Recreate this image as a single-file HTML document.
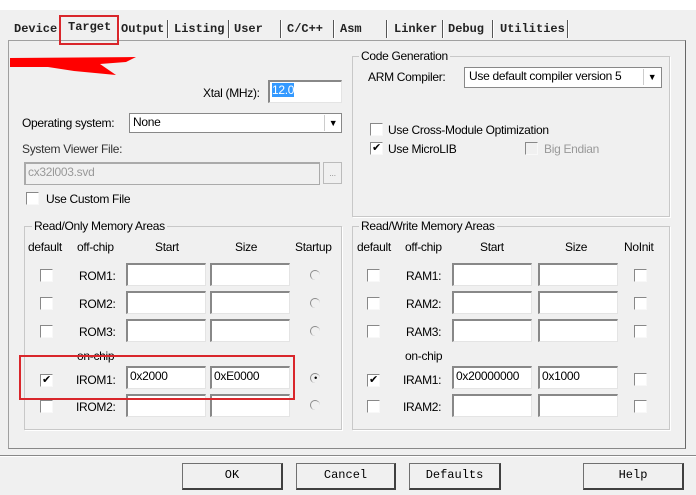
<!DOCTYPE html>
<html><head><meta charset="utf-8"><style>
body{margin:0;width:696px;height:495px;background:#fff;position:relative;overflow:hidden;font-family:"Liberation Sans",sans-serif;font-size:12px;color:#000;letter-spacing:-0.3px}
.a{position:absolute;white-space:nowrap}
.bg{left:0;top:10px;width:696px;height:485px;background:#f0f0f0}
.tab{font-family:"Liberation Mono","Noto Serif CJK SC",monospace;font-size:12px;letter-spacing:0;font-weight:bold;color:#222}
.vs{width:1px;height:18px;background:#555;border-right:1px solid #fff}
.panel{left:8px;top:40px;width:676px;height:407px;border:1px solid #a0a0a0;border-right-color:#666;border-bottom-color:#888}
.grp{border:1px solid #c8c8c8;box-shadow:1px 1px 0 #fff}
.gt{background:#f0f0f0;padding:0 2px}
.in{background:#fff;border-top:2px solid #888;border-left:2px solid #888;border-bottom:1px solid #e4e4e4;border-right:1px solid #e4e4e4;box-sizing:border-box;padding:1px 2px;font-size:12px}
.cb{width:11px;height:11px;background:#fff;border-top:1px solid #888;border-left:1px solid #888;border-bottom:1px solid #f8f8f8;border-right:1px solid #f8f8f8;font-size:11px;line-height:11px;text-align:center}
.rd{width:10px;height:10px;border-radius:50%;border-left:1px solid #888;border-top:1px solid #888;box-sizing:border-box;font-size:9px;line-height:8px;text-align:center}
.btn{border:1px solid #707070;border-right:2px solid #404040;border-bottom:2px solid #404040;background:#f0f0f0;box-sizing:border-box;font-family:"Liberation Mono",monospace;font-size:12px;text-align:center;line-height:23px;letter-spacing:0}
.red{border:2px solid #d9262b;box-sizing:border-box}
.dd{width:16px;height:16px;border-left:1px solid #ccc;font-size:9px;text-align:center;line-height:16px}
</style></head><body>
<div class="a bg"></div>
<div class="a panel"></div>
<!-- tabs -->
<div class="a tab" style="left:14px;top:22px">Device</div>
<div class="a tab" style="left:68px;top:20px">Target</div>
<div class="a vs" style="left:118px;top:20px"></div>
<div class="a tab" style="left:121px;top:22px">Output</div>
<div class="a vs" style="left:167px;top:20px"></div>
<div class="a tab" style="left:174px;top:22px">Listing</div>
<div class="a vs" style="left:228px;top:20px"></div>
<div class="a tab" style="left:234px;top:22px">User</div>
<div class="a vs" style="left:280px;top:20px"></div>
<div class="a tab" style="left:287px;top:22px">C/C++</div>
<div class="a vs" style="left:333px;top:20px"></div>
<div class="a tab" style="left:340px;top:22px">Asm</div>
<div class="a vs" style="left:386px;top:20px"></div>
<div class="a tab" style="left:394px;top:22px">Linker</div>
<div class="a vs" style="left:442px;top:20px"></div>
<div class="a tab" style="left:448px;top:22px">Debug</div>
<div class="a vs" style="left:492px;top:20px"></div>
<div class="a tab" style="left:500px;top:22px">Utilities</div>
<div class="a vs" style="left:567px;top:20px"></div>
<div class="a red" style="left:59px;top:15px;width:60px;height:30px"></div>
<!-- scribble -->
<svg class="a" style="left:8px;top:52px" width="132" height="26"><path d="M2 6 L128 5 L118 10 L92 12 L108 23 L66 19 L40 15 L2 15 Z" fill="#ff0000"/></svg>
<!-- left top -->
<div class="a" style="left:203px;top:86px">Xtal (MHz):</div>
<div class="a in" style="left:268px;top:80px;width:74px;height:23px"><span style="background:#3399ff;color:#fff">12.0</span></div>
<div class="a" style="left:22px;top:116px">Operating system:</div>
<div class="a in" style="left:129px;top:113px;width:213px;height:20px;border-width:1px;border-color:#888;padding:1px 3px">None</div>
<div class="a dd" style="left:324px;top:115px">▼</div>
<div class="a" style="left:22px;top:142px;color:#333">System Viewer File:</div>
<div class="a in" style="left:24px;top:162px;width:296px;height:23px;background:#f0f0f0;color:#999;border-color:#aaa">cx32l003.svd</div>
<div class="a" style="left:323px;top:162px;width:19px;height:22px;border:1px solid #bbb;box-sizing:border-box;color:#999;font-size:9px;text-align:center;line-height:20px">...</div>
<div class="a cb" style="left:26px;top:192px"></div>
<div class="a" style="left:46px;top:192px">Use Custom File</div>
<!-- RO group -->
<div class="a grp" style="left:24px;top:226px;width:316px;height:202px"></div>
<div class="a gt" style="left:32px;top:219px">Read/Only Memory Areas</div>
<div class="a" style="left:28px;top:240px">default</div>
<div class="a" style="left:77px;top:240px">off-chip</div>
<div class="a" style="left:155px;top:240px">Start</div>
<div class="a" style="left:235px;top:240px">Size</div>
<div class="a" style="left:295px;top:240px">Startup</div>
<div class="a" style="left:77px;top:349px">on-chip</div>
<!-- RO rows -->
<div class="a cb" style="left:40px;top:269px"></div><div class="a" style="left:79px;top:269px">ROM1:</div>
<div class="a in" style="left:126px;top:263px;width:80px;height:23px"></div><div class="a in" style="left:210px;top:263px;width:80px;height:23px"></div><div class="a rd" style="left:310px;top:270px"></div>
<div class="a cb" style="left:40px;top:297px"></div><div class="a" style="left:79px;top:297px">ROM2:</div>
<div class="a in" style="left:126px;top:291px;width:80px;height:23px"></div><div class="a in" style="left:210px;top:291px;width:80px;height:23px"></div><div class="a rd" style="left:310px;top:298px"></div>
<div class="a cb" style="left:40px;top:325px"></div><div class="a" style="left:79px;top:325px">ROM3:</div>
<div class="a in" style="left:126px;top:319px;width:80px;height:23px"></div><div class="a in" style="left:210px;top:319px;width:80px;height:23px"></div><div class="a rd" style="left:310px;top:326px"></div>
<div class="a cb" style="left:40px;top:374px">✔</div><div class="a" style="left:76px;top:373px">IROM1:</div>
<div class="a in" style="left:126px;top:366px;width:80px;height:23px">0x2000</div><div class="a in" style="left:210px;top:366px;width:80px;height:23px">0xE0000</div><div class="a rd" style="left:310px;top:373px">•</div>
<div class="a cb" style="left:40px;top:400px"></div><div class="a" style="left:76px;top:400px">IROM2:</div>
<div class="a in" style="left:126px;top:394px;width:80px;height:23px"></div><div class="a in" style="left:210px;top:394px;width:80px;height:23px"></div><div class="a rd" style="left:310px;top:400px"></div>
<div class="a red" style="left:19px;top:355px;width:276px;height:45px"></div>
<!-- code gen -->
<div class="a grp" style="left:352px;top:56px;width:316px;height:159px"></div>
<div class="a gt" style="left:359px;top:49px">Code Generation</div>
<div class="a" style="left:368px;top:70px">ARM Compiler:</div>
<div class="a in" style="left:464px;top:67px;width:198px;height:21px;border-width:1px;border-color:#888;padding:1px 4px">Use default compiler version 5</div>
<div class="a dd" style="left:643px;top:69px">▼</div>
<div class="a cb" style="left:370px;top:123px"></div><div class="a" style="left:388px;top:123px">Use Cross-Module Optimization</div>
<div class="a cb" style="left:370px;top:142px">✔</div><div class="a" style="left:388px;top:142px">Use MicroLIB</div>
<div class="a cb" style="left:525px;top:142px;background:#f0f0f0"></div><div class="a" style="left:544px;top:142px;color:#999">Big Endian</div>
<!-- RW group -->
<div class="a grp" style="left:352px;top:226px;width:316px;height:202px"></div>
<div class="a gt" style="left:359px;top:219px">Read/Write Memory Areas</div>
<div class="a" style="left:357px;top:240px">default</div>
<div class="a" style="left:405px;top:240px">off-chip</div>
<div class="a" style="left:480px;top:240px">Start</div>
<div class="a" style="left:565px;top:240px">Size</div>
<div class="a" style="left:624px;top:240px">NoInit</div>
<div class="a" style="left:405px;top:349px">on-chip</div>
<div class="a cb" style="left:367px;top:269px"></div><div class="a" style="left:406px;top:269px">RAM1:</div>
<div class="a in" style="left:452px;top:263px;width:80px;height:23px"></div><div class="a in" style="left:538px;top:263px;width:80px;height:23px"></div><div class="a cb" style="left:634px;top:269px"></div>
<div class="a cb" style="left:367px;top:297px"></div><div class="a" style="left:406px;top:297px">RAM2:</div>
<div class="a in" style="left:452px;top:291px;width:80px;height:23px"></div><div class="a in" style="left:538px;top:291px;width:80px;height:23px"></div><div class="a cb" style="left:634px;top:297px"></div>
<div class="a cb" style="left:367px;top:325px"></div><div class="a" style="left:406px;top:325px">RAM3:</div>
<div class="a in" style="left:452px;top:319px;width:80px;height:23px"></div><div class="a in" style="left:538px;top:319px;width:80px;height:23px"></div><div class="a cb" style="left:634px;top:325px"></div>
<div class="a cb" style="left:367px;top:374px">✔</div><div class="a" style="left:403px;top:373px">IRAM1:</div>
<div class="a in" style="left:452px;top:366px;width:80px;height:23px">0x20000000</div><div class="a in" style="left:538px;top:366px;width:80px;height:23px">0x1000</div><div class="a cb" style="left:634px;top:373px"></div>
<div class="a cb" style="left:367px;top:400px"></div><div class="a" style="left:403px;top:400px">IRAM2:</div>
<div class="a in" style="left:452px;top:394px;width:80px;height:23px"></div><div class="a in" style="left:538px;top:394px;width:80px;height:23px"></div><div class="a cb" style="left:634px;top:400px"></div>
<!-- bottom -->
<div class="a" style="left:0;top:455px;width:696px;height:1px;background:#888;border-bottom:1px solid #fff"></div>
<div class="a btn" style="left:182px;top:463px;width:101px;height:27px">OK</div>
<div class="a btn" style="left:296px;top:463px;width:100px;height:27px">Cancel</div>
<div class="a btn" style="left:409px;top:463px;width:92px;height:27px">Defaults</div>
<div class="a btn" style="left:583px;top:463px;width:101px;height:27px">Help</div>
</body></html>
